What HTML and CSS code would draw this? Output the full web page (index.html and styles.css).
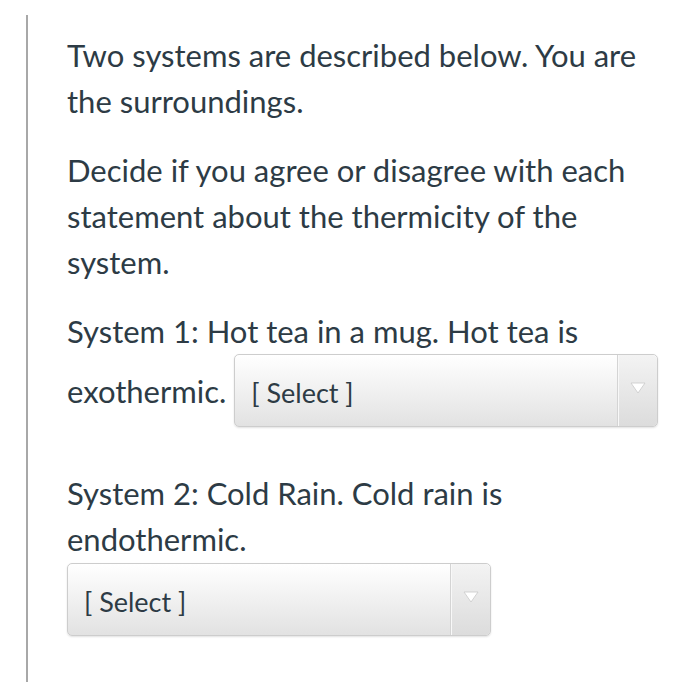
FILE: index.html
```html
<!DOCTYPE html>
<html>
<head>
<meta charset="utf-8">
<link rel="stylesheet" href="styles.css">
</head>
<body>
<div class="question">
  <p class="para">Two systems are described below. You are the surroundings.</p>
  <p class="para">Decide if you agree or disagree with each statement about the thermicity of the system.</p>
  <p class="para sys1">System 1: Hot tea in a mug. Hot tea is exothermic. <span class="select inline"><span class="sel-text">[ Select ]</span><span class="sel-arrow"><svg width="16" height="12" viewBox="0 0 16 12"><path d="M1 1 L15 1 L8 11 Z" fill="#fff" stroke="#c9c9c9" stroke-width="0.8" stroke-linejoin="round"/></svg></span></span></p>
  <p class="para sys2">System 2: Cold Rain. Cold rain is endothermic.</p>
  <div class="select block"><span class="sel-text">[ Select ]</span><span class="sel-arrow"><svg width="16" height="12" viewBox="0 0 16 12"><path d="M1 1 L15 1 L8 11 Z" fill="#fff" stroke="#c9c9c9" stroke-width="0.8" stroke-linejoin="round"/></svg></span></div>
</div>
</body>
</html>
```
FILE: styles.css
```css
html, body {
  margin: 0;
  padding: 0;
  background: #fff;
}
body {
  font-family: Lato, "Open Sans", sans-serif;
  color: #2d3b45;
}
.question {
  margin-left: 26px;
  margin-top: 15px;
  border-left: 2px solid #a8a8a8;
  padding: 17px 30px 0 39px;
  box-sizing: border-box;
  height: 667px;
}
.para {
  margin: 0 0 23px 0;
  font-size: 31px;
  line-height: 46px;
}
.sys1 {
  margin-bottom: 43px;
}
.sys2 {
  margin-bottom: 0;
}
.select {
  display: inline-flex;
  align-items: stretch;
  width: 424px;
  height: 73px;
  box-sizing: border-box;
  border: 1px solid #cdcdcd;
  border-radius: 5px;
  background: linear-gradient(#ffffff, #e2e2e2);
  box-shadow: 0 1px 2px rgba(0,0,0,0.12);
  font-size: 27px;
  line-height: 1;
}
.inline {
  vertical-align: baseline;
}
.sel-text {
  flex: 1;
  display: flex;
  align-items: center;
  padding-left: 16px;
  padding-top: 3px;
  color: #2d3b45;
}
.sel-arrow {
  width: 39px;
  border-left: 1px solid #d4d4d4;
  box-shadow: inset 1px 0 0 #f8f8f8;
  background: linear-gradient(#f3f3f3, #dcdcdc);
  display: flex;
  align-items: center;
  justify-content: center;
  padding-bottom: 6px;
  border-radius: 0 5px 5px 0;
}
.select.block {
  display: flex;
  margin-top: 1px;
}
```
